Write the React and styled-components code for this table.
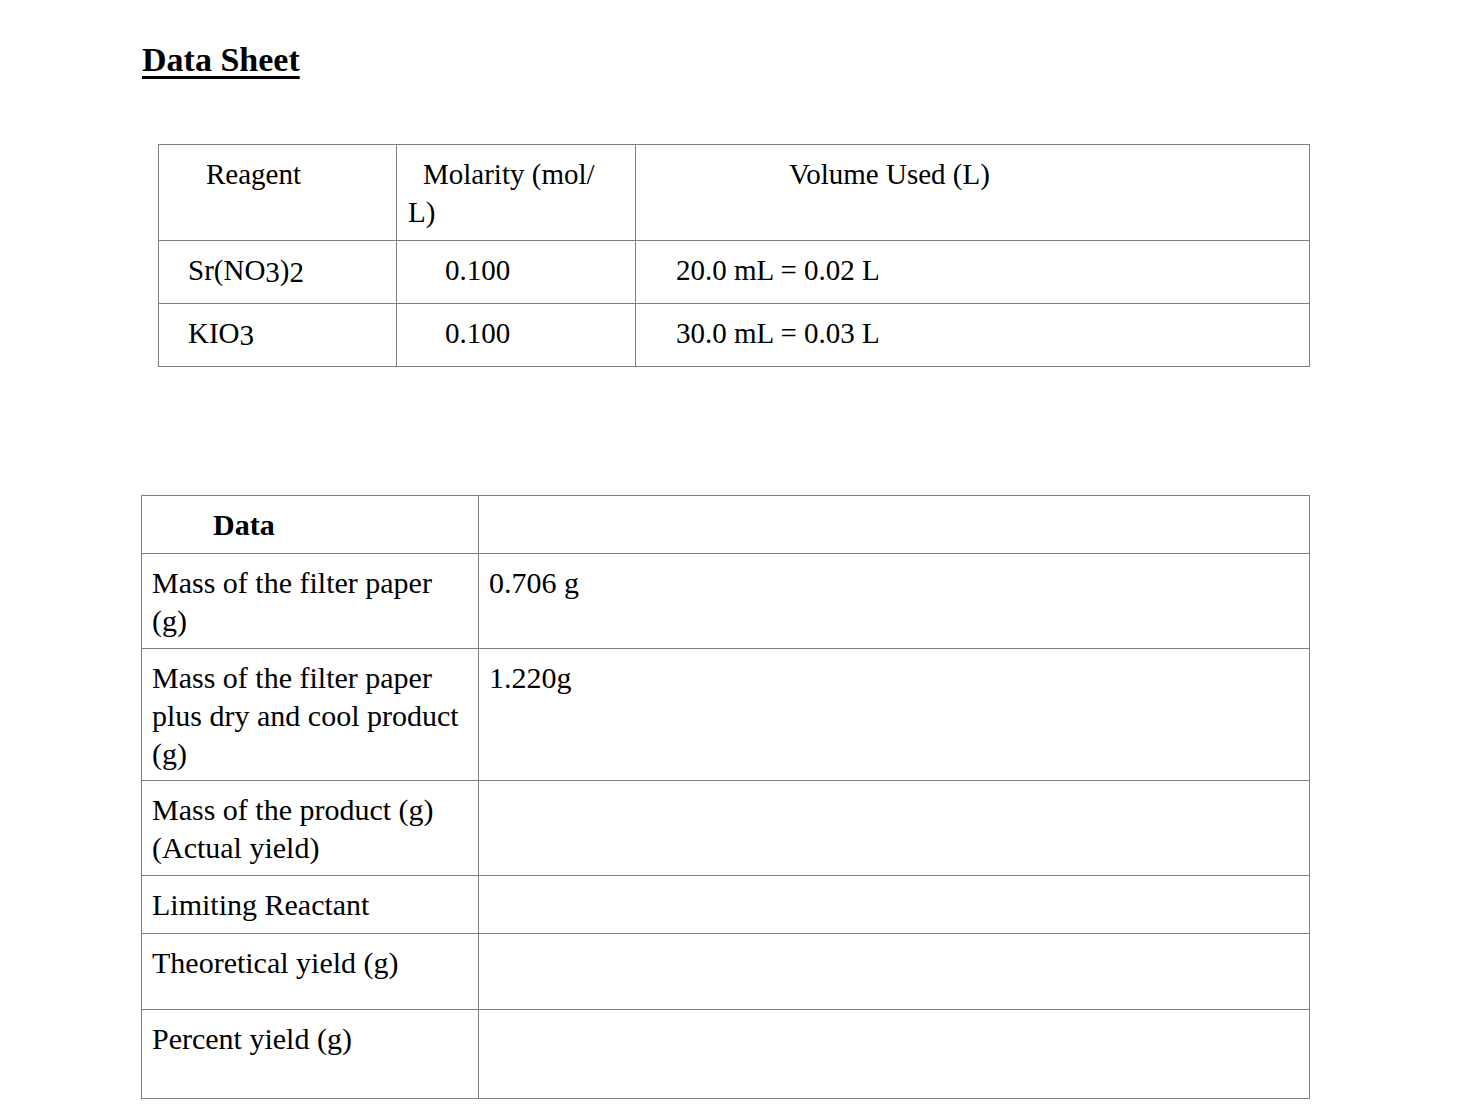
import React from 'react'
import styled, { createGlobalStyle } from 'styled-components'

const GlobalStyle = createGlobalStyle`
  body {
    margin: 0;
    background: #ffffff;
  }
`

const Page = styled.div`
  width: 1466px;
  min-height: 1116px;
  box-sizing: border-box;
  padding: 40px 0 0 0;
  font-family: 'Liberation Serif', 'Times New Roman', serif;
  color: #000;
  display: flex;
  flex-direction: column;
`

const Title = styled.h1`
  margin: 0 0 0 142px;
  font-size: 34px;
  line-height: 40px;
  font-weight: bold;
  text-decoration: underline;
  text-decoration-thickness: 3px;
  text-underline-offset: 5px;
`

const Table = styled.div`
  box-sizing: border-box;
  width: ${(p) => p.width}px;
  margin-left: ${(p) => p.left}px;
  margin-top: ${(p) => p.top}px;
  border: 1px solid #808080;
  font-size: ${(p) => p.size}px;
  line-height: 38px;
`

const Row = styled.div`
  display: grid;
  grid-template-columns: ${(p) => p.cols};
  height: ${(p) => p.h}px;
  box-sizing: border-box;
  & + & {
    border-top: 1px solid #808080;
  }
`

const Cell = styled.div`
  box-sizing: border-box;
  padding: 10px 14px 0 ${(p) => p.indent ?? 10}px;
  text-indent: ${(p) => p.first ?? 0}px;
  font-weight: ${(p) => (p.bold ? 'bold' : 'normal')};
  & + & {
    border-left: 1px solid #808080;
  }
`

const Sub = styled.span`
  position: relative;
  top: 2px;
`

const reagentCols = '237px 239px 1fr'
const dataCols = '336px 1fr'

const reagents = [
  { name: <>Sr(NO<Sub>3</Sub>)<Sub>2</Sub></>, molarity: '0.100', volume: '20.0 mL = 0.02 L' },
  { name: <>KIO<Sub>3</Sub></>, molarity: '0.100', volume: '30.0 mL = 0.03 L' },
]

const dataRows = [
  { label: 'Mass of the filter paper (g)', value: '0.706 g', h: 95 },
  { label: 'Mass of the filter paper plus dry and cool product (g)', value: '1.220g', h: 132 },
  { label: 'Mass of the product (g) (Actual yield)', value: '', h: 95 },
  { label: 'Limiting Reactant', value: '', h: 58 },
  { label: 'Theoretical yield (g)', value: '', h: 76 },
  { label: 'Percent yield (g)', value: '', h: 89 },
]

export default function App() {
  return (
    <Page>
      <GlobalStyle />
      <Title>Data Sheet</Title>

      <Table width={1152} left={158} top={64} size={29}>
        <Row cols={reagentCols} h={95}>
          <Cell indent={47}>Reagent</Cell>
          <Cell indent={11} first={15}>Molarity (mol/<wbr />L)</Cell>
          <Cell indent={153}>Volume Used (L)</Cell>
        </Row>
        {reagents.map((r, i) => (
          <Row key={i} cols={reagentCols} h={63}>
            <Cell indent={29}>{r.name}</Cell>
            <Cell indent={48}>{r.molarity}</Cell>
            <Cell indent={40}>{r.volume}</Cell>
          </Row>
        ))}
      </Table>

      <Table width={1169} left={141} top={128} size={30}>
        <Row cols={dataCols} h={57}>
          <Cell indent={71} bold>Data</Cell>
          <Cell />
        </Row>
        {dataRows.map((d, i) => (
          <Row key={i} cols={dataCols} h={d.h}>
            <Cell>{d.label}</Cell>
            <Cell>{d.value}</Cell>
          </Row>
        ))}
      </Table>
    </Page>
  )
}
